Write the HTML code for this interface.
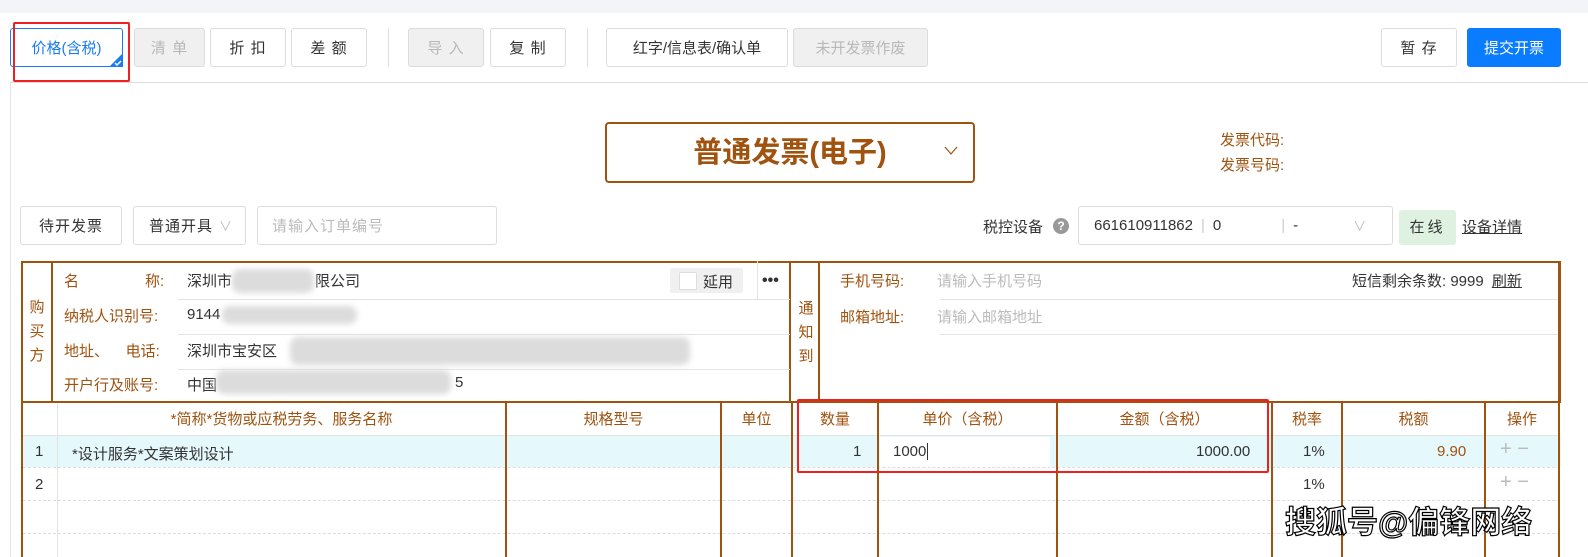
<!DOCTYPE html>
<html><head><meta charset="utf-8"><style>
*{box-sizing:border-box;margin:0;padding:0}
body{width:1588px;height:557px;overflow:hidden;background:#fff;font-family:"Liberation Sans","Noto Sans CJK SC",sans-serif;font-size:15px;color:#333;position:relative}
.a{position:absolute}
.btn{position:absolute;top:28px;height:39px;border:1px solid #dcdcdc;border-radius:3px;background:#fff;display:flex;align-items:center;justify-content:center;font-size:15px;color:#333;letter-spacing:1px}
.dis{background:#f0f0f0;color:#b8b8b8}
.br{color:#a0520f}
.bl{background:#a0520f}
.gl{background:#e3e3e3;height:1px}
.blur{position:absolute;background:#dcdcdc;filter:blur(3px);border-radius:8px}
.t{position:absolute;white-space:nowrap}
.hd{position:absolute;top:402px;height:33px;display:flex;align-items:center;justify-content:center;color:#a0520f;font-size:15px}
</style></head><body>
<div class="a" style="left:0;top:0;width:1588px;height:13px;background:#f3f4f8"></div>
<div class="btn" style="left:10px;width:113px;border-color:#1a7cf0;color:#1a7cf0;letter-spacing:0">价格(含税)</div>
<svg class="a" style="left:109px;top:53px" width="14" height="14"><path d="M14 0V14H0Z" fill="#1a7cf0"/><path d="M6 10l2 2 4-4" stroke="#fff" stroke-width="1.5" fill="none"/></svg>
<div class="a" style="left:13px;top:22px;width:117px;height:60px;border:2px solid #f02020;border-radius:2px"></div>
<div class="btn dis" style="left:134px;width:71px">清 单</div>
<div class="btn" style="left:210px;width:76px">折 扣</div>
<div class="btn" style="left:291px;width:76px">差 额</div>
<div class="a" style="left:388px;top:28px;width:1px;height:39px;background:#e0e0e0"></div>
<div class="btn dis" style="left:408px;width:76px">导 入</div>
<div class="btn" style="left:490px;width:76px">复 制</div>
<div class="a" style="left:587px;top:28px;width:1px;height:39px;background:#e0e0e0"></div>
<div class="btn" style="left:606px;width:182px;letter-spacing:0">红字/信息表/确认单</div>
<div class="btn dis" style="left:793px;width:135px;letter-spacing:0">未开发票作废</div>
<div class="btn" style="left:1381px;width:76px">暂 存</div>
<div class="btn" style="left:1467px;width:94px;background:#0a7cff;border-color:#0a7cff;color:#fff;letter-spacing:0">提交开票</div>
<div class="a" style="left:10px;top:82px;width:1578px;height:1px;background:#dcdcdc"></div>
<div class="a" style="left:10px;top:82px;width:1px;height:475px;background:#e3e3e3"></div>

<div class="a" style="left:605px;top:122px;width:370px;height:61px;border:2px solid #a0520f;border-radius:4px"></div>
<div class="t br" style="left:605px;top:134px;width:370px;text-align:center;font-size:29px;font-weight:bold;line-height:38px">普通发票(电子)</div>
<svg class="a" style="left:944px;top:146px" width="14" height="10"><path d="M1 1l6 7 6-7" stroke="#a0520f" stroke-width="1.2" fill="none"/></svg>
<div class="t br" style="left:1220px;top:129px">发票代码:</div>
<div class="t br" style="left:1220px;top:154px">发票号码:</div>

<div class="btn" style="left:20px;top:206px;width:102px;height:39px">待开发票</div>
<div class="btn" style="left:133px;top:206px;width:113px;height:39px;justify-content:flex-start;padding-left:15px">普通开具 <span style="color:#bbb;margin-left:6px;font-size:13px">∨</span></div>
<div class="btn" style="left:257px;top:206px;width:240px;height:39px;justify-content:flex-start;padding-left:14px;color:#bbb">请输入订单编号</div>
<div class="t" style="left:983px;top:216px">税控设备</div>
<div class="a" style="left:1053px;top:218px;width:16px;height:16px;border-radius:50%;background:#999;color:#fff;font-size:12px;text-align:center;line-height:16px;font-weight:bold">?</div>
<div class="btn" style="left:1078px;top:206px;width:315px;height:39px;justify-content:flex-start;padding-left:15px;letter-spacing:0">661610911862 <span style="color:#ccc;margin:0 8px">|</span>0<span style="color:#ccc;margin:0 8px 0 60px">|</span>-<span style="color:#bbb;margin-left:55px;font-size:13px">∨</span></div>
<div class="a" style="left:1399px;top:210px;width:57px;height:35px;background:#dff2e1;border-radius:3px;text-align:center;line-height:35px;letter-spacing:3px">在线</div>
<div class="t" style="left:1462px;top:216px;text-decoration:underline">设备详情</div>

<div class="a" style="left:21px;top:261px;width:1540px;height:142px;border:2px solid #a0520f;border-bottom:none"></div>
<div class="a bl" style="left:51px;top:261px;width:2px;height:142px"></div>
<div class="a bl" style="left:789px;top:261px;width:2px;height:142px"></div>
<div class="a bl" style="left:818px;top:261px;width:2px;height:142px"></div>
<div class="t br" style="left:27px;top:296px;width:20px;line-height:24px;white-space:normal;text-align:center">购<br>买<br>方</div>
<div class="t br" style="left:796px;top:297px;width:20px;line-height:24px;white-space:normal;text-align:center">通<br>知<br>到</div>
<div class="t br" style="left:64px;top:270px">名</div><div class="t br" style="left:145px;top:270px">称:</div>
<div class="t br" style="left:64px;top:305px">纳税人识别号:</div>
<div class="t br" style="left:64px;top:340px">地址、&nbsp;&nbsp;&nbsp;&nbsp;电话:</div>
<div class="t br" style="left:64px;top:374px">开户行及账号:</div>
<div class="a gl" style="left:178px;top:299px;width:612px"></div>
<div class="a gl" style="left:178px;top:334px;width:612px"></div>
<div class="a gl" style="left:178px;top:369px;width:612px"></div>
<div class="a" style="left:757px;top:261px;width:1px;height:38px;background:#e3e3e3"></div>
<div class="t" style="left:187px;top:270px">深圳市</div><div class="t" style="left:315px;top:270px">限公司</div>
<div class="blur" style="left:232px;top:269px;width:82px;height:24px"></div>
<div class="t" style="left:187px;top:306px">9144</div>
<div class="blur" style="left:222px;top:306px;width:135px;height:18px"></div>
<div class="t" style="left:187px;top:340px">深圳市宝安区</div>
<div class="blur" style="left:290px;top:337px;width:400px;height:28px"></div>
<div class="t" style="left:187px;top:374px">中国</div><div class="t" style="left:455px;top:374px">5</div>
<div class="blur" style="left:216px;top:370px;width:235px;height:24px"></div>
<div class="a" style="left:670px;top:268px;width:73px;height:25px;background:#f0f0f0;border-radius:2px"></div>
<div class="a" style="left:679px;top:272px;width:18px;height:18px;background:#fff;border:1px solid #ddd;border-radius:2px"></div>
<div class="t" style="left:703px;top:271px">延用</div>
<div class="t" style="left:762px;top:272px;font-weight:bold;font-size:16px">•••</div>
<div class="t br" style="left:840px;top:270px">手机号码:</div>
<div class="t" style="left:937px;top:270px;color:#bbb">请输入手机号码</div>
<div class="t br" style="left:840px;top:306px">邮箱地址:</div>
<div class="t" style="left:937px;top:306px;color:#bbb">请输入邮箱地址</div>
<div class="a gl" style="left:940px;top:299px;width:620px"></div>
<div class="a gl" style="left:940px;top:334px;width:620px"></div>
<div class="t" style="left:1352px;top:270px">短信剩余条数: 9999 <span style="text-decoration:underline;margin-left:4px">刷新</span></div>

<div class="a bl" style="left:21px;top:401px;width:1540px;height:2px"></div>
<div class="a" style="left:21px;top:435px;width:1540px;height:32px;background:#e5f8fc"></div>
<div class="a gl" style="left:23px;top:435px;width:1537px"></div>
<div class="a" style="left:23px;top:467px;width:1537px;border-top:1px dashed #ddd"></div>
<div class="a" style="left:23px;top:500px;width:1537px;border-top:1px dashed #ddd"></div>
<div class="a" style="left:23px;top:533px;width:1537px;border-top:1px dashed #ddd"></div>
<div class="a bl" style="left:21px;top:401px;width:2px;height:156px"></div>
<div class="a" style="left:57px;top:403px;width:1px;height:154px;background:#e3e3e3"></div>
<div class="a bl" style="left:505px;top:401px;width:2px;height:156px"></div>
<div class="a bl" style="left:720px;top:401px;width:2px;height:156px"></div>
<div class="a bl" style="left:791px;top:401px;width:2px;height:156px"></div>
<div class="a bl" style="left:877px;top:401px;width:2px;height:156px"></div>
<div class="a bl" style="left:1056px;top:401px;width:2px;height:156px"></div>
<div class="a bl" style="left:1271px;top:401px;width:2px;height:156px"></div>
<div class="a bl" style="left:1341px;top:401px;width:2px;height:156px"></div>
<div class="a bl" style="left:1484px;top:401px;width:2px;height:156px"></div>
<div class="a bl" style="left:1558px;top:261px;width:2px;height:296px"></div>
<div class="hd" style="left:58px;width:447px">*简称*货物或应税劳务、服务名称</div>
<div class="hd" style="left:507px;width:213px">规格型号</div>
<div class="hd" style="left:722px;width:69px">单位</div>
<div class="hd" style="left:793px;width:84px">数量</div>
<div class="hd" style="left:879px;width:177px">单价（含税）</div>
<div class="hd" style="left:1058px;width:213px">金额（含税）</div>
<div class="hd" style="left:1273px;width:68px">税率</div>
<div class="hd" style="left:1343px;width:141px">税额</div>
<div class="hd" style="left:1486px;width:72px">操作</div>
<div class="t" style="left:35px;top:443px">1</div>
<div class="t" style="left:35px;top:476px">2</div>
<div class="t" style="left:72px;top:443px">*设计服务*文案策划设计</div>
<div class="t" style="left:853px;top:443px">1</div>
<div class="a" style="left:880px;top:437px;width:170px;height:30px;background:#fff"></div>
<div class="t" style="left:893px;top:443px">1000<span style="border-left:1px solid #333;margin-left:1px"></span></div>
<div class="t" style="left:1196px;top:443px">1000.00</div>
<div class="t" style="left:1303px;top:443px">1%</div>
<div class="t" style="left:1303px;top:476px">1%</div>
<div class="t br" style="left:1437px;top:443px">9.90</div>
<div class="t" style="left:1500px;top:438px;color:#bbb;font-size:20px">+ −</div>
<div class="t" style="left:1500px;top:471px;color:#bbb;font-size:20px">+ −</div>
<div class="a" style="left:797px;top:399px;width:472px;height:74px;border:2px solid #f02020;border-radius:2px"></div>
<div class="t" style="left:1285px;top:497px;font-size:31px;font-weight:bold;color:#fff;-webkit-text-stroke:1.2px #000;letter-spacing:0">搜狐号@偏锋网络</div>
</body></html>
